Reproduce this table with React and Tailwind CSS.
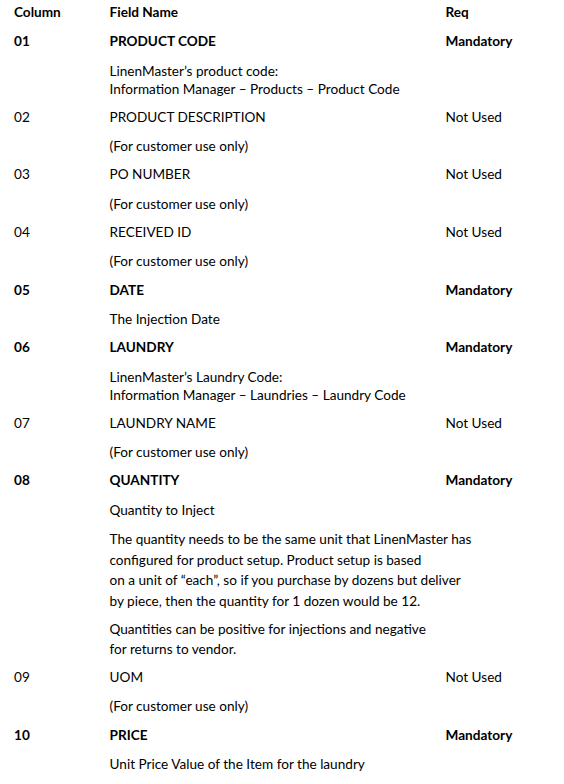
const FIELDS = [
  { col: '01', name: 'PRODUCT CODE', req: 'Mandatory', notes: [["LinenMaster’s product code:", 'Information Manager – Products – Product Code']] },
  { col: '02', name: 'PRODUCT DESCRIPTION', req: 'Not Used', notes: [['(For customer use only)']] },
  { col: '03', name: 'PO NUMBER', req: 'Not Used', notes: [['(For customer use only)']] },
  { col: '04', name: 'RECEIVED ID', req: 'Not Used', notes: [['(For customer use only)']] },
  { col: '05', name: 'DATE', req: 'Mandatory', notes: [['The Injection Date']] },
  { col: '06', name: 'LAUNDRY', req: 'Mandatory', notes: [["LinenMaster’s Laundry Code:", 'Information Manager – Laundries – Laundry Code']] },
  { col: '07', name: 'LAUNDRY NAME', req: 'Not Used', notes: [['(For customer use only)']] },
  {
    col: '08',
    name: 'QUANTITY',
    req: 'Mandatory',
    notes: [['Quantity to Inject']],
    extra: [
      [
        'The quantity needs to be the same unit that LinenMaster has',
        'configured for product setup. Product setup is based',
        'on a unit of “each”, so if you purchase by dozens but deliver',
        'by piece, then the quantity for 1 dozen would be 12.',
      ],
      ['Quantities can be positive for injections and negative', 'for returns to vendor.'],
    ],
  },
  { col: '09', name: 'UOM', req: 'Not Used', notes: [['(For customer use only)']] },
  { col: '10', name: 'PRICE', req: 'Mandatory', notes: [['Unit Price Value of the Item for the laundry']] },
];

const Row = ({ col, name, req, bold }) => (
  <div className={`grid grid-cols-[95.5px_336px_1fr] leading-[18px] mb-[11.3px] ${bold ? 'font-bold' : ''}`}>
    <div>{col}</div>
    <div>{name}</div>
    <div>{req}</div>
  </div>
);

export default function App() {
  return (
    <div
      className="w-[564px] h-[784px] overflow-hidden bg-white text-black text-[13.6px] pl-[14px] pt-[3px]"
      style={{ fontFamily: 'Lato, "Liberation Sans", sans-serif' }}
    >
      <Row col="Column" name="Field Name" req="Req" bold />
      {FIELDS.map((f) => (
        <div key={f.col}>
          <Row col={f.col} name={f.name} req={f.req} bold={f.req === 'Mandatory'} />
          {f.notes.map((lines, i) => (
            <div key={i} className="pl-[95.5px] leading-[18px] mb-[10.3px]">
              {lines.map((l) => (
                <div key={l}>{l}</div>
              ))}
            </div>
          ))}
          {f.extra && (
            <div className="pl-[95.5px] leading-[20.5px]">
              {f.extra.map((lines, i) => (
                <div key={i} className={i === 0 ? 'mb-[7.5px]' : 'mb-[8.5px]'}>
                  {lines.map((l) => (
                    <div key={l}>{l}</div>
                  ))}
                </div>
              ))}
            </div>
          )}
        </div>
      ))}
    </div>
  );
}
